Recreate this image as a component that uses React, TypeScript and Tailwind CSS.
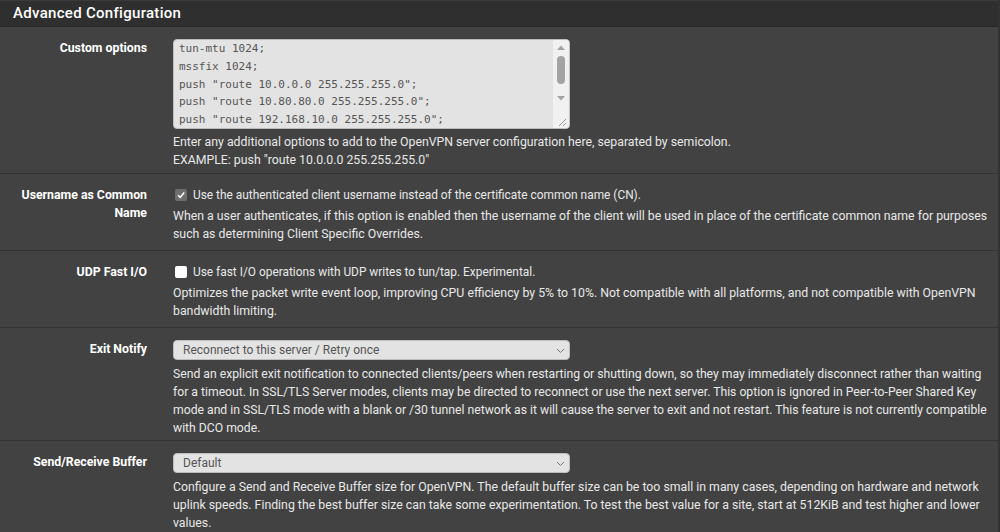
import React from "react";

const help = "text-[12.3px] leading-[17.5px] text-[#e8e8e8]";

function Row({ label, children, className = "" }: { label: React.ReactNode; children: React.ReactNode; className?: string }) {
  return (
    <div className={`flex border-b border-[#333333] ${className}`}>
      <div className="w-[160px] shrink-0 pr-[13px] text-right text-[12.3px] leading-[18px] font-bold text-white">{label}</div>
      <div className="flex-1 pl-[13px] pr-[6px]">{children}</div>
    </div>
  );
}

function Chevron() {
  return (
    <svg width="9" height="6" viewBox="0 0 9 6" className="absolute right-[4px] top-[7px]">
      <path d="M1 1 L4.5 4.5 L8 1" fill="none" stroke="#777" strokeWidth="1" />
    </svg>
  );
}

function Select({ value }: { value: string }) {
  return (
    <div className="relative w-[397px] h-[20px] rounded-[4px] border border-[#bdbdbd] bg-[#e3e3e3] pl-[9px] text-[12px] leading-[18px] text-[#555555]">
      {value}
      <Chevron />
    </div>
  );
}

export default function App() {
  const lines = [
    "tun-mtu 1024;",
    "mssfix 1024;",
    'push "route 10.0.0.0 255.255.255.0";',
    'push "route 10.80.80.0 255.255.255.0";',
    'push "route 192.168.10.0 255.255.255.0";',
  ];
  return (
    <div className="w-[1000px] h-[532px] overflow-hidden bg-[#424242]" style={{ fontFamily: "Roboto, 'Liberation Sans', sans-serif" }}>
      <div className="border-r-2 border-[#333333] h-full">
        <div className="h-[27px] bg-[#2f2f2f] border-t border-[#3a3a3a] border-b border-b-[#262626] pl-[13px] text-[15px] leading-[24px] font-medium tracking-[0.3px] text-white">
          Advanced Configuration
        </div>

        <Row label="Custom options" className="pt-[12px] pb-[4px]">
          <div className="flex w-[397px] h-[90px] rounded-[4px] border border-[#bdbdbd] bg-[#e3e3e3] overflow-hidden">
            <div className="flex-1 pl-[5px] text-[11px] leading-[17.75px] text-[#555555] whitespace-pre" style={{ fontFamily: "'DejaVu Sans Mono', monospace" }}>
              {lines.map((l) => (
                <div key={l}>{l}</div>
              ))}
            </div>
            <div className="w-[16px] bg-[#f1f1f1] flex flex-col items-center">
              <svg width="16" height="16" viewBox="0 0 16 16"><path d="M4 10 L8 5.5 L12 10 Z" fill="#a3a3a3" /></svg>
              <div className="w-[8px] h-[28px] rounded-[4px] bg-[#a3a3a3]" />
              <svg width="16" height="16" viewBox="0 0 16 16" className="mt-[6px]"><path d="M4 6 L8 10.5 L12 6 Z" fill="#a3a3a3" /></svg>
              <div className="flex-1" />
              <svg width="16" height="14" viewBox="0 0 16 14"><path d="M6 12 L13 5 M10 12 L13 9" stroke="#999" strokeWidth="1" /></svg>
            </div>
          </div>
          <div className={`${help} mt-[5px]`}>
            Enter any additional options to add to the OpenVPN server configuration here, separated by semicolon.
            <br />
            EXAMPLE: push "route 10.0.0.0 255.255.255.0"
          </div>
        </Row>

        <Row label={<>Username as Common<br />Name</>} className="pt-[12px] pb-[7px]">
          <label className="flex items-center gap-[6px] text-[11.9px] leading-[18px] text-[#e8e8e8]">
            <span className="w-[12px] h-[12px] rounded-[2px] bg-[#6e6e6e] ml-[2px] flex items-center justify-center">
              <svg width="10" height="10" viewBox="0 0 10 10"><path d="M2 5.2 L4.2 7.4 L8.2 2.6" fill="none" stroke="#fff" strokeWidth="1.6" /></svg>
            </span>
            Use the authenticated client username instead of the certificate common name (CN).
          </label>
          <div className={`${help} mt-[4px]`}>
            When a user authenticates, if this option is enabled then the username of the client will be used in place of the certificate common name for purposes such as determining Client Specific Overrides.
          </div>
        </Row>

        <Row label="UDP Fast I/O" className="pt-[12px] pb-[7px]">
          <label className="flex items-center gap-[6px] text-[11.9px] leading-[18px] text-[#e8e8e8]">
            <span className="w-[12px] h-[12px] rounded-[2px] bg-white ml-[2px]" />
            Use fast I/O operations with UDP writes to tun/tap. Experimental.
          </label>
          <div className={`${help} mt-[4px]`}>
            Optimizes the packet write event loop, improving CPU efficiency by 5% to 10%. Not compatible with all platforms, and not compatible with OpenVPN bandwidth limiting.
          </div>
        </Row>

        <Row label="Exit Notify" className="pt-[12px] pb-[3px]">
          <Select value="Reconnect to this server / Retry once" />
          <div className="mt-[5px] text-[12.2px] leading-[18px] text-[#e8e8e8]">
            Send an explicit exit notification to connected clients/peers when restarting or shutting down, so they may immediately disconnect rather than waiting for a timeout. In SSL/TLS Server modes, clients may be directed to reconnect or use the next server. This option is ignored in Peer-to-Peer Shared Key mode and in SSL/TLS mode with a blank or /30 tunnel network as it will cause the server to exit and not restart. This feature is not currently compatible with DCO mode.
          </div>
        </Row>

        <Row label="Send/Receive Buffer" className="pt-[12px] pb-[5px]">
          <Select value="Default" />
          <div className="mt-[5px] text-[12.3px] leading-[18px] text-[#e8e8e8]">
            Configure a Send and Receive Buffer size for OpenVPN. The default buffer size can be too small in many cases, depending on hardware and network uplink speeds. Finding the best buffer size can take some experimentation. To test the best value for a site, start at 512KiB and test higher and lower values.
          </div>
        </Row>
      </div>
    </div>
  );
}
